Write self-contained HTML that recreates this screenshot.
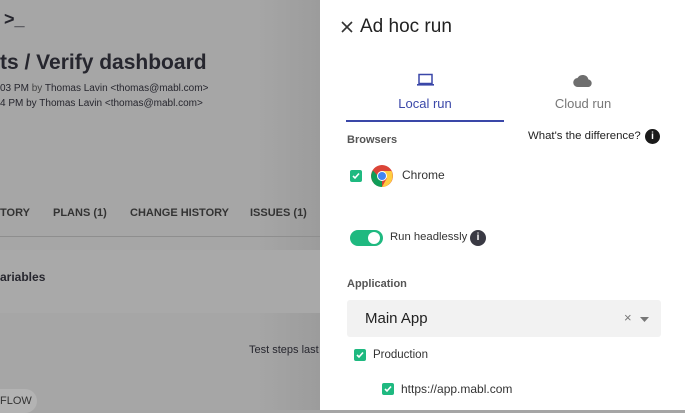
<!DOCTYPE html>
<html><head><meta charset="utf-8"><style>
*{margin:0;padding:0;box-sizing:border-box}
body{width:685px;height:410px;overflow:hidden;position:relative;font-family:"Liberation Sans",sans-serif;background:#a5a5a5}
.a{position:absolute;white-space:nowrap}
.l{color:#26262e}
.cb{position:absolute;width:12px;height:12px;background:#1fb980;border-radius:2px}
.cb svg{position:absolute;left:1px;top:1px}
</style></head><body>
<div class="a" style="left:0;top:0;width:320px;height:410px;background:linear-gradient(90deg,#a6a6a6 0%,#a6a6a6 80%,#9c9c9c 100%)"></div>
<div class="a" style="left:0;top:250px;width:320px;height:63px;background:#a9a9a9"></div>
<div class="a" style="left:0;top:236px;width:320px;height:1px;background:#8e8e8e"></div>
<div class="a l" style="left:4px;top:9px;font-size:18px;font-weight:bold">&gt;_</div>
<div class="a l" style="left:0;top:51px;font-size:21px;font-weight:bold">ts / Verify dashboard</div>
<div class="a l" style="left:0;top:83px;font-size:10px">03 PM <span style="color:#444">by</span> Thomas Lavin &lt;thomas@mabl.com&gt;</div>
<div class="a l" style="left:0;top:98px;font-size:10px">4 PM by Thomas Lavin &lt;thomas@mabl.com&gt;</div>
<div class="a l" style="left:0;top:207px;font-size:11px;font-weight:bold;color:#333">TORY</div>
<div class="a l" style="left:53px;top:207px;font-size:11px;font-weight:bold;color:#333">PLANS (1)</div>
<div class="a l" style="left:130px;top:207px;font-size:11px;font-weight:bold;color:#333">CHANGE HISTORY</div>
<div class="a l" style="left:250px;top:207px;font-size:11px;font-weight:bold;color:#333">ISSUES (1)</div>
<div class="a l" style="left:0;top:270px;font-size:12px;font-weight:bold">ariables</div>
<div class="a l" style="left:249px;top:344px;font-size:11px">Test steps last</div>
<div class="a" style="left:-20px;top:389px;width:57px;height:24px;border-radius:12px;background:#b3b3b3"></div>
<div class="a l" style="left:0;top:395px;font-size:11px;color:#333">FLOW</div>

<div class="a" style="left:320px;top:0;width:365px;height:410px;background:#fff"></div>
<svg class="a" style="left:341px;top:21px" width="12" height="12"><path d="M1 1L11 11M11 1L1 11" stroke="#333" stroke-width="1.6"/></svg>
<div class="a" style="left:360px;top:16px;font-size:19px;color:#222">Ad hoc run</div>
<svg class="a" style="left:416px;top:73px" width="19" height="14"><rect x="3" y="1.5" width="13" height="9" fill="none" stroke="#3a47a8" stroke-width="1.5"/><rect x="1" y="11" width="17" height="1.6" fill="#3a47a8"/></svg>
<div class="a" style="left:346px;top:96px;width:158px;text-align:center;font-size:13px;color:#3a47a8">Local run</div>
<div class="a" style="left:346px;top:120px;width:158px;height:2px;background:#3a47a8"></div>
<svg class="a" style="left:573px;top:73px" width="20" height="15"><path d="M5 14a4.5 4.5 0 0 1 -0.5-9a6 6 0 0 1 11 1.5a3.8 3.8 0 0 1 0 7.5z" fill="#6e6e6e"/></svg>
<div class="a" style="left:504px;top:96px;width:158px;text-align:center;font-size:13px;color:#777">Cloud run</div>
<div class="a" style="left:347px;top:134px;font-size:11px;font-weight:bold;color:#555">Browsers</div>
<div class="a" style="left:528px;top:130px;font-size:11.4px;color:#222">What's the difference?</div>
<div class="a" style="left:645px;top:129px;width:15px;height:15px;border-radius:50%;background:#1a1a1a;color:#fff;font-size:10px;font-weight:bold;text-align:center;line-height:15px">i</div>
<div class="cb" style="left:350px;top:170px"><svg width="10" height="10"><path d="M2 5l2 2 4-4.5" stroke="#fff" stroke-width="1.6" fill="none"/></svg></div>
<svg class="a" style="left:371px;top:165px" width="22" height="22" viewBox="0 0 22 22"><circle cx="11" cy="11" r="11" fill="#db4437"/><path d="M11 11L1.5 16.5A11 11 0 0 0 11 22z" fill="#0f9d58"/><path d="M11 11L1.5 16.5A11 11 0 0 1 2 5.5L6 10z" fill="#0f9d58"/><path d="M11 11V6h9.5A11 11 0 0 1 11 22L16 13z" fill="#ffcd40"/><circle cx="11" cy="11" r="5" fill="#fff"/><circle cx="11" cy="11" r="4" fill="#4285f4"/></svg>
<div class="a" style="left:402px;top:168px;font-size:12px;color:#333">Chrome</div>
<div class="a" style="left:350px;top:230px;width:33px;height:16px;border-radius:8px;background:#1fb980"></div>
<div class="a" style="left:368px;top:232px;width:12px;height:12px;border-radius:50%;background:#fff"></div>
<div class="a" style="left:390px;top:231px;font-size:11.3px;color:#333">Run headlessly</div>
<div class="a" style="left:470px;top:230px;width:16px;height:16px;border-radius:50%;background:#3a3a44;color:#fff;font-size:10px;font-weight:bold;text-align:center;line-height:16px">i</div>
<div class="a" style="left:347px;top:278px;font-size:11px;font-weight:bold;color:#555">Application</div>
<div class="a" style="left:347px;top:300px;width:314px;height:37px;background:#f2f2f2;border-radius:3px"></div>
<div class="a" style="left:365px;top:310px;font-size:15px;color:#222">Main App</div>
<div class="a" style="left:624px;top:310px;font-size:13px;color:#777">×</div>
<svg class="a" style="left:640px;top:317px" width="10" height="5"><path d="M0 0h9L4.5 5z" fill="#777"/></svg>
<div class="cb" style="left:354px;top:349px"><svg width="10" height="10"><path d="M2 5l2 2 4-4.5" stroke="#fff" stroke-width="1.6" fill="none"/></svg></div>
<div class="a" style="left:373px;top:349px;font-size:11.5px;color:#333">Production</div>
<div class="cb" style="left:382px;top:383px"><svg width="10" height="10"><path d="M2 5l2 2 4-4.5" stroke="#fff" stroke-width="1.6" fill="none"/></svg></div>
<div class="a" style="left:401px;top:382px;font-size:12px;color:#333">https://app.mabl.com</div>
</body></html>
